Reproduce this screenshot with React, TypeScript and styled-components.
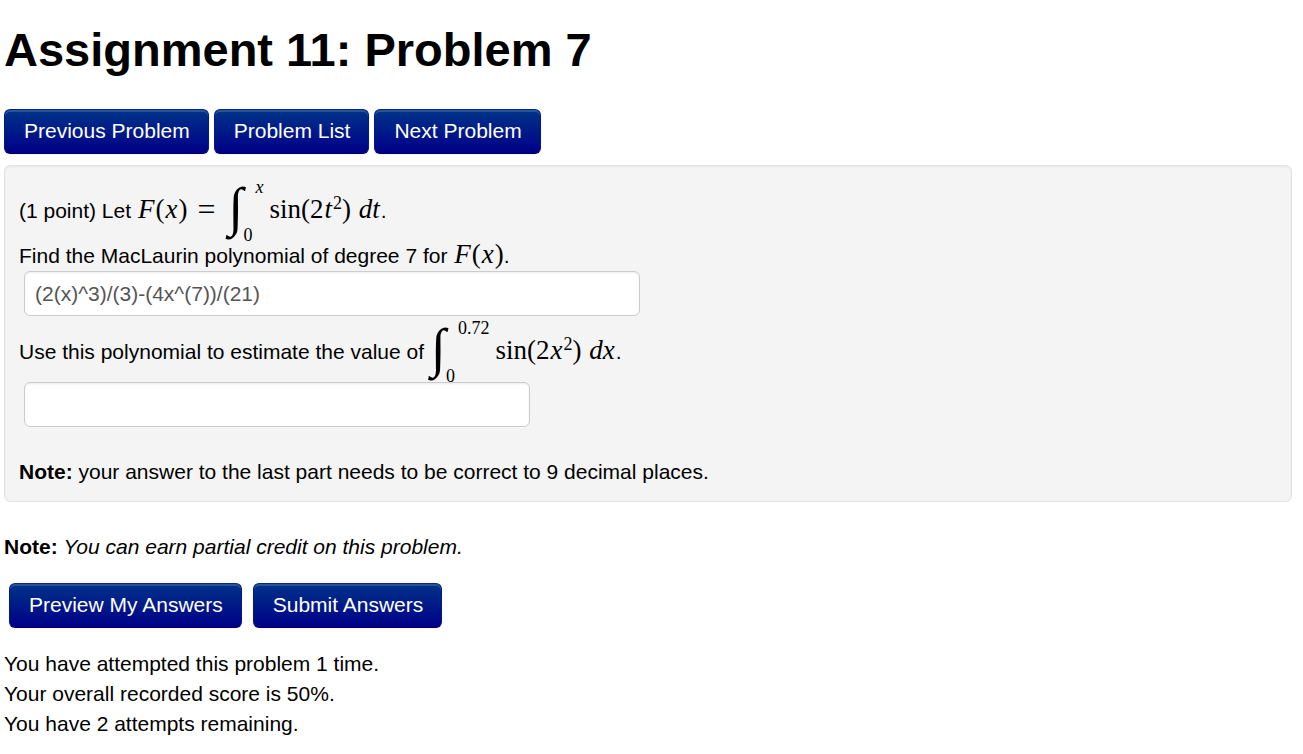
import React from "react";
import styled, { createGlobalStyle, css } from "styled-components";

const GlobalStyle = createGlobalStyle`
  *, *::before, *::after { box-sizing: border-box; }
  body {
    margin: 0;
    background: #fff;
    color: #000;
    font-family: "Liberation Sans", Arial, Helvetica, sans-serif;
    font-size: 21px;
    line-height: 30px;
  }
`;

const Page = styled.main`
  padding: 20px 11px 15px 4px;
`;

const Title = styled.h1`
  margin: 0 0 29px;
  font-size: 47px;
  line-height: 60px;
  font-weight: 700;
`;

const buttonLook = css`
  display: inline-block;
  padding: 6px 18px 7px 19px;
  border: 1px solid;
  border-color: #002a80 #001c80 #000060;
  border-radius: 6px;
  background: linear-gradient(#003388, #000088);
  box-shadow: inset 0 2px 0 rgba(255, 255, 255, 0.16), 0 1px 2px rgba(0, 0, 0, 0.05);
  color: #fff;
  font: inherit;
  text-decoration: none;
  white-space: nowrap;
  cursor: pointer;
`;

const NavLink = styled.a`
  ${buttonLook}
`;

const ActionButton = styled.button`
  ${buttonLook}
`;

const NavBar = styled.nav`
  display: flex;
  flex-wrap: wrap;
  gap: 5px;
  margin-bottom: 11px;
`;

const Actions = styled.div`
  display: flex;
  flex-wrap: wrap;
  gap: 11px;
  margin: 21px 5px;
`;

const ProblemPanel = styled.section`
  padding: 15px 14px 14px;
  border: 1px solid #e3e3e3;
  border-radius: 6px;
  background: #f4f4f4;
  box-shadow: inset 0 1px 2px rgba(0, 0, 0, 0.06);
`;

const Prompt = styled.label<{ $spaced?: boolean }>`
  display: flex;
  flex-wrap: wrap;
  align-items: center;
  padding-top: ${(p) => (p.$spaced ? 6 : 0)}px;
`;

const Run = styled.span`
  white-space: pre-wrap;
`;

const MathText = styled.span`
  font-family: "Liberation Serif", "Times New Roman", serif;
  font-size: 27px;
  line-height: 26px;
`;

const Variable = styled.i`
  padding: 0 1px;
`;

const Relation = styled.span`
  margin: 0 6px 0 10px;
  font-size: 32px;
  line-height: 0;
  vertical-align: -2px;
`;

const Power = styled.sup`
  font-size: 18px;
  line-height: 0;
  vertical-align: 9px;
`;

const IntegralBox = styled.span`
  display: flex;
  height: 60px;
  margin: 0 6px 0 7px;
  font-family: "Liberation Serif", "Times New Roman", serif;
`;

const IntegralSign = styled.i`
  width: 15px;
  font-size: 54px;
  line-height: 52px;
`;

const Limits = styled.span`
  display: flex;
  flex-direction: column;
  justify-content: space-between;
  font-size: 18px;
  line-height: 12px;
`;

const UpperLimit = styled.span`
  padding-left: 12px;
`;

const AnswerInput = styled.input<{ $width: number }>`
  display: block;
  width: ${(p) => p.$width}px;
  max-width: calc(100% - 10px);
  height: 45px;
  margin: 0 5px;
  padding: 6px 10px;
  border: 1px solid #ccc;
  border-radius: 6px;
  background: #fff;
  box-shadow: inset 0 1px 2px rgba(0, 0, 0, 0.08);
  color: #555;
  font: inherit;
`;

const Paragraph = styled.p<{ $top?: number }>`
  margin: ${(p) => p.$top ?? 0}px 0 0;
`;

function Integral({ upper }: { upper: React.ReactNode }) {
  return (
    <IntegralBox>
      <IntegralSign>∫</IntegralSign>
      <Limits>
        <UpperLimit>{upper}</UpperLimit>
        <span>0</span>
      </Limits>
    </IntegralBox>
  );
}

export default function App() {
  return (
    <>
      <GlobalStyle />
      <Page>
        <Title>Assignment 11: Problem 7</Title>
        <NavBar>
          <NavLink href="#previous">Previous Problem</NavLink>
          <NavLink href="#list">Problem List</NavLink>
          <NavLink href="#next">Next Problem</NavLink>
        </NavBar>
        <form onSubmit={(e) => e.preventDefault()}>
          <ProblemPanel>
            <Prompt as="div">
              <Run>
                (1 point) Let <MathText><Variable>F</Variable>(<Variable>x</Variable>)<Relation>=</Relation></MathText>
              </Run>
              <Integral upper={<i>x</i>} />
              <Run>
                <MathText>sin(2<Variable>t</Variable><Power>2</Power>) <Variable>dt</Variable></MathText>.
              </Run>
            </Prompt>
            <Prompt htmlFor="polynomial">
              <Run>
                Find the MacLaurin polynomial of degree 7 for <MathText><Variable>F</Variable>(<Variable>x</Variable>)</MathText>.
              </Run>
            </Prompt>
            <AnswerInput id="polynomial" type="text" $width={616} defaultValue="(2(x)^3)/(3)-(4x^(7))/(21)" />
            <Prompt htmlFor="estimate" $spaced>
              <Run>Use this polynomial to estimate the value of</Run>
              <Integral upper="0.72" />
              <Run>
                <MathText>sin(2<Variable>x</Variable><Power>2</Power>) <Variable>dx</Variable></MathText>.
              </Run>
            </Prompt>
            <AnswerInput id="estimate" type="text" $width={506} />
            <Paragraph $top={30}>
              <b>Note:</b> your answer to the last part needs to be correct to 9 decimal places.
            </Paragraph>
          </ProblemPanel>
          <Paragraph $top={30}>
            <b>Note:</b> <i>You can earn partial credit on this problem.</i>
          </Paragraph>
          <Actions>
            <ActionButton type="button">Preview My Answers</ActionButton>
            <ActionButton type="submit">Submit Answers</ActionButton>
          </Actions>
        </form>
        <Paragraph>You have attempted this problem 1 time.</Paragraph>
        <Paragraph>Your overall recorded score is 50%.</Paragraph>
        <Paragraph>You have 2 attempts remaining.</Paragraph>
      </Page>
    </>
  );
}
